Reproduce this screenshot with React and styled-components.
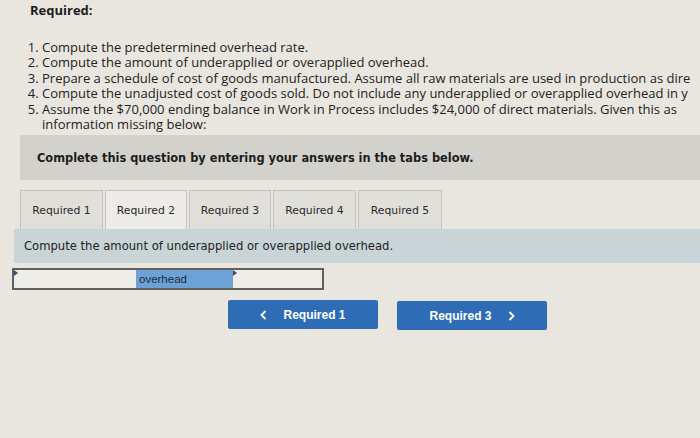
import React from 'react';
import styled, { createGlobalStyle } from 'styled-components';

const GlobalStyle = createGlobalStyle`
  html, body {
    margin: 0;
    padding: 0;
    background: #e9e6e0;
    overflow: hidden;
  }
`;

const Page = styled.div`
  width: 700px;
  height: 438px;
  background: #e9e6e0;
  overflow: hidden;
  padding-top: 2px;
  box-sizing: border-box;
`;

const Heading = styled.div`
  margin-left: 30px;
  font-family: 'Open Sans', 'Liberation Sans', sans-serif;
  font-weight: 700;
  font-size: 13px;
  line-height: 16px;
  color: #1d1d1d;
`;

const Steps = styled.ol`
  margin: 22px 0 0 0;
  padding-left: 42px;
  font-family: 'Open Sans', 'Liberation Sans', sans-serif;
  font-size: 13px;
  line-height: 15.4px;
  color: #222;
  white-space: nowrap;
`;

const Wrap = styled.span`
  white-space: normal;
  display: block;
  width: 640px;
`;

const Banner = styled.div`
  margin: 3px 0 0 20px;
  height: 45px;
  background: #d3d1cc;
  display: flex;
  align-items: center;
  padding-left: 17px;
  font-family: 'DejaVu Sans', Verdana, sans-serif;
  font-weight: 700;
  font-size: 11.4px;
  color: #1c1c1c;
`;

const TabRow = styled.div`
  margin: 10px 0 0 20px;
  display: flex;
  gap: 2px;
`;

const Tab = styled.div`
  width: ${p => p.w}px;
  height: 39px;
  box-sizing: border-box;
  display: flex;
  align-items: center;
  justify-content: center;
  border: 1px solid #c4c2bd;
  border-bottom: none;
  background: ${p => (p.active ? '#ecebe7' : '#e1dfda')};
  font-family: 'DejaVu Sans', Verdana, sans-serif;
  font-size: 10.8px;
  color: #2a2a2a;
`;

const Panel = styled.div`
  margin-left: 14px;
  height: 34px;
  background: #c9d4d7;
  display: flex;
  align-items: center;
  padding-left: 10px;
  font-family: 'DejaVu Sans', Verdana, sans-serif;
  font-size: 11.6px;
  color: #222;
`;

const AnswerRow = styled.div`
  margin: 5px 0 0 12px;
  width: 312px;
  height: 22px;
  box-sizing: border-box;
  border: 2px solid #5e5f60;
  display: flex;
`;

const Cell = styled.div`
  position: relative;
  width: ${p => p.w}px;
  height: 100%;
  box-sizing: border-box;
  background: ${p => (p.label ? '#6da2d7' : '#efede8')};
  font-family: 'Liberation Sans', Arial, sans-serif;
  font-size: 11.5px;
  color: #1e2a3a;
  padding-left: 3px;
  display: flex;
  align-items: center;
`;

const Flag = styled.span`
  position: absolute;
  left: 0;
  top: 0;
  width: 0;
  height: 0;
  border-top: 3px solid transparent;
  border-bottom: 3px solid transparent;
  border-left: 4px solid #34517a;
`;

const NavRow = styled.div`
  margin: 10px 0 0 228px;
  display: flex;
  gap: 19px;
`;

const NavButton = styled.div`
  width: 150px;
  height: 29px;
  margin-top: ${p => p.offset || 0}px;
  background: #2e6db6;
  border-radius: 2px;
  display: flex;
  align-items: center;
  justify-content: center;
  gap: 16px;
  font-family: 'Liberation Sans', Arial, sans-serif;
  font-weight: 700;
  font-size: 12px;
  color: #fff;
`;

const Chevron = ({ dir }) => (
  <svg width="7" height="10" viewBox="0 0 7 10">
    <path
      d={dir === 'left' ? 'M5.5 1 L1.5 5 L5.5 9' : 'M1.5 1 L5.5 5 L1.5 9'}
      fill="none"
      stroke="#fff"
      strokeWidth="1.8"
    />
  </svg>
);

const tabs = [
  { label: 'Required 1', w: 83 },
  { label: 'Required 2', w: 82, active: true },
  { label: 'Required 3', w: 82 },
  { label: 'Required 4', w: 83 },
  { label: 'Required 5', w: 84 },
];

export default function App() {
  return (
    <Page>
      <GlobalStyle />
      <Heading>Required:</Heading>
      <Steps>
        <li>Compute the predetermined overhead rate.</li>
        <li>Compute the amount of underapplied or overapplied overhead.</li>
        <li>Prepare a schedule of cost of goods manufactured. Assume all raw materials are used in production as dire</li>
        <li>Compute the unadjusted cost of goods sold. Do not include any underapplied or overapplied overhead in y</li>
        <li>
          Assume the $70,000 ending balance in Work in Process includes $24,000 of direct materials. Given this as
          <Wrap>information missing below:</Wrap>
        </li>
      </Steps>
      <Banner>Complete this question by entering your answers in the tabs below.</Banner>
      <TabRow>
        {tabs.map(t => (
          <Tab key={t.label} w={t.w} active={t.active}>
            {t.label}
          </Tab>
        ))}
      </TabRow>
      <Panel>Compute the amount of underapplied or overapplied overhead.</Panel>
      <AnswerRow>
        <Cell w={122}>
          <Flag />
        </Cell>
        <Cell w={97} label>
          overhead
        </Cell>
        <Cell w={89}>
          <Flag />
        </Cell>
      </AnswerRow>
      <NavRow>
        <NavButton>
          <Chevron dir="left" />
          Required 1
        </NavButton>
        <NavButton offset={1}>
          Required 3
          <Chevron dir="right" />
        </NavButton>
      </NavRow>
    </Page>
  );
}
